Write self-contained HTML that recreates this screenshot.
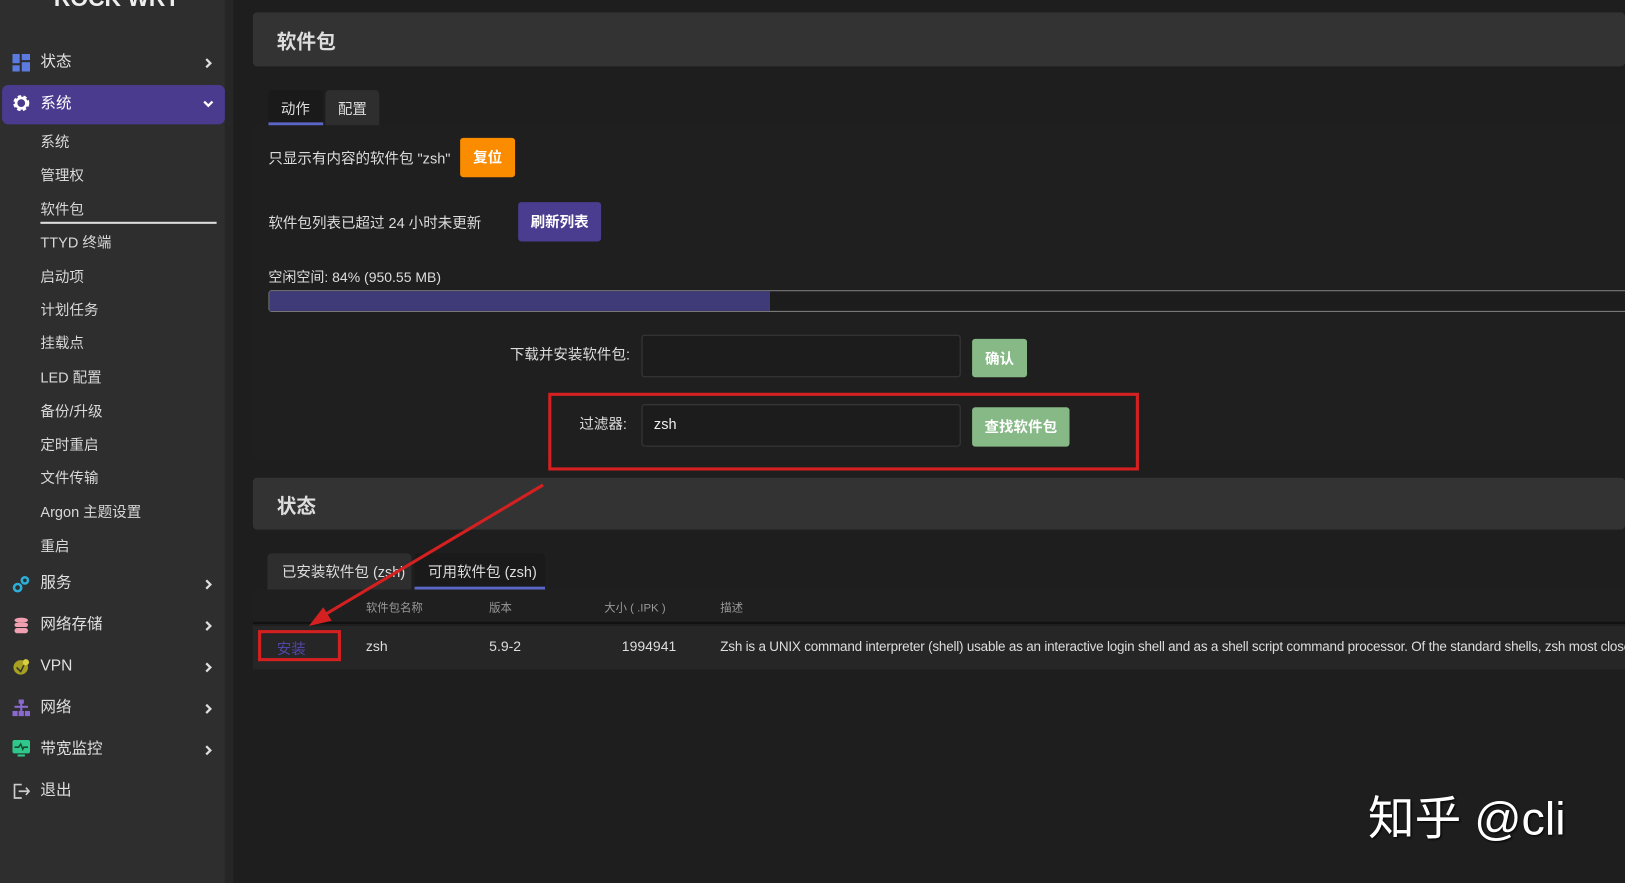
<!DOCTYPE html>
<html><head><meta charset="utf-8"><style>
*{margin:0;padding:0;box-sizing:border-box}
html,body{width:1625px;height:883px;overflow:hidden;background:#1e1e1e}
#w{position:absolute;left:0;top:0;width:1568px;height:852px;overflow:hidden;transform:scale(1.03635);transform-origin:0 0;font-family:"Liberation Sans","Noto Sans CJK SC",sans-serif;color:#ddd}
.a{position:absolute;white-space:nowrap}
#sb{position:absolute;left:0;top:0;width:225px;height:852px;background:#2e2e2e;border-right:8px solid #262626}
.mi{position:absolute;left:39px;font-size:15px;color:#e0e0e0;line-height:20px}
.si{position:absolute;left:39px;font-size:14px;color:#d8d8d8;line-height:18px}
.chev{position:absolute;left:197px;width:8px;height:12px}
.ic{position:absolute;left:12px;width:17px;height:17px}
.ph{position:absolute;left:244px;width:1324px;background:#333;border-radius:4px}
.btn{position:absolute;border-radius:3px;color:#fff;font-size:14px;font-weight:bold;display:flex;align-items:center;justify-content:center}
.inp{position:absolute;left:619px;width:308px;border:1px solid #3a3a3a;border-radius:3px;background:#1c1c1c}
</style></head><body><div id="w">
<div id="sb"></div>
<div class="a" style="left:52px;top:-14px;font-size:22px;font-weight:bold;color:#eee">ROCK WRT</div>
<svg class="ic" style="top:52px" viewBox="0 0 17 17"><rect x="0" y="0" width="7" height="9" fill="#5b7be0"/><rect x="9" y="0" width="8" height="6" fill="#5b7be0"/><rect x="0" y="11" width="7" height="6" fill="#5b7be0"/><rect x="9" y="8" width="8" height="9" fill="#5b7be0"/></svg>
<div class="mi" style="top:50px">状态</div><svg class="chev" style="top:55px" viewBox="0 0 8 12"><path d="M2 2l4 4-4 4" stroke="#ddd" stroke-width="2.2" fill="none"/></svg>
<div class="a" style="left:2px;top:82px;width:215px;height:38px;background:#4a3b8e;border-radius:6px"></div>
<svg class="ic" style="top:91px" viewBox="0 0 17 17"><circle cx="8.5" cy="8.5" r="6" fill="none" stroke="#fff" stroke-width="3.5" stroke-dasharray="3 2"/><circle cx="8.5" cy="8.5" r="5" fill="none" stroke="#fff" stroke-width="2.5"/></svg>
<div class="mi" style="top:90px;color:#fff">系统</div><svg class="a" style="left:195px;top:96px" width="12" height="8" viewBox="0 0 12 8"><path d="M2 2l4 4 4-4" stroke="#fff" stroke-width="2.2" fill="none"/></svg>
<div class="si" style="top:128px">系统</div>
<div class="si" style="top:160px">管理权</div>
<div class="si" style="top:193px">软件包</div>
<div class="a" style="left:39px;top:214px;width:170px;height:2px;background:#ddd"></div>
<div class="si" style="top:225px">TTYD 终端</div>
<div class="si" style="top:258px">启动项</div>
<div class="si" style="top:290px">计划任务</div>
<div class="si" style="top:322px">挂载点</div>
<div class="si" style="top:355px">LED 配置</div>
<div class="si" style="top:388px">备份/升级</div>
<div class="si" style="top:420px">定时重启</div>
<div class="si" style="top:452px">文件传输</div>
<div class="si" style="top:485px">Argon 主题设置</div>
<div class="si" style="top:518px">重启</div>
<svg class="ic" style="top:555px" viewBox="0 0 17 17"><circle cx="5" cy="12" r="3.5" fill="none" stroke="#2ab0d8" stroke-width="2.5"/><circle cx="12" cy="5" r="3" fill="none" stroke="#2ab0d8" stroke-width="2.5"/></svg>
<div class="mi" style="top:553px">服务</div><svg class="chev" style="top:558px" viewBox="0 0 8 12"><path d="M2 2l4 4-4 4" stroke="#ddd" stroke-width="2.2" fill="none"/></svg>
<svg class="ic" style="top:595px" viewBox="0 0 17 17"><ellipse cx="8.5" cy="3.5" rx="6.5" ry="2.5" fill="#f0a0b0"/><rect x="2" y="6" width="13" height="4" rx="2" fill="#f0a0b0"/><rect x="2" y="11" width="13" height="5" rx="2.5" fill="#f0a0b0"/></svg>
<div class="mi" style="top:593px">网络存储</div><svg class="chev" style="top:598px" viewBox="0 0 8 12"><path d="M2 2l4 4-4 4" stroke="#ddd" stroke-width="2.2" fill="none"/></svg>
<svg class="ic" style="top:635px" viewBox="0 0 17 17"><circle cx="8" cy="9" r="7" fill="#a8a020"/><circle cx="13" cy="4" r="3" fill="#d8d040"/><path d="M4 9l4 4 3-6" stroke="#333" stroke-width="1.5" fill="none"/></svg>
<div class="mi" style="top:633px">VPN</div><svg class="chev" style="top:638px" viewBox="0 0 8 12"><path d="M2 2l4 4-4 4" stroke="#ddd" stroke-width="2.2" fill="none"/></svg>
<svg class="ic" style="top:675px" viewBox="0 0 17 17" fill="#8a6ad0"><rect x="6" y="0" width="5" height="4"/><rect x="0" y="11" width="5" height="5"/><rect x="6" y="11" width="5" height="5"/><rect x="12" y="11" width="5" height="5"/><rect x="2" y="6" width="13" height="2"/><rect x="7.5" y="3" width="2" height="8"/></svg>
<div class="mi" style="top:673px">网络</div><svg class="chev" style="top:678px" viewBox="0 0 8 12"><path d="M2 2l4 4-4 4" stroke="#ddd" stroke-width="2.2" fill="none"/></svg>
<svg class="ic" style="top:714px" viewBox="0 0 17 17"><rect x="0" y="0" width="17" height="13" rx="2" fill="#2ec98a"/><rect x="5" y="14" width="7" height="2" fill="#2ec98a"/><path d="M2 7h4l2-3 2 5 1-2h4" stroke="#1a4a36" stroke-width="1.5" fill="none"/></svg>
<div class="mi" style="top:713px">带宽监控</div><svg class="chev" style="top:718px" viewBox="0 0 8 12"><path d="M2 2l4 4-4 4" stroke="#ddd" stroke-width="2.2" fill="none"/></svg>
<svg class="ic" style="top:755px" viewBox="0 0 17 17" fill="none" stroke="#ccc" stroke-width="1.6"><path d="M9 2H2v13h7M6 8.5h10M13 5l3 3.5-3 3.5"/></svg>
<div class="mi" style="top:753px">退出</div>

<div class="ph" style="top:12px;height:52px"></div>
<div class="a" style="left:267px;top:26px;font-size:19px;font-weight:bold;color:#ddd">软件包</div>
<div class="a" style="left:259px;top:87px;width:53px;height:34px;background:#1a1a1a;border-radius:4px 4px 0 0;border-bottom:3px solid #5c66c8"></div>
<div class="a" style="left:271px;top:95px;font-size:14px;color:#ddd">动作</div>
<div class="a" style="left:314px;top:87px;width:52px;height:34px;background:#2e2e2e;border-radius:4px 4px 0 0"></div>
<div class="a" style="left:326px;top:95px;font-size:14px;color:#ddd">配置</div>
<div class="a" style="left:244px;top:121px;width:1324px;height:324px;background:#1f1f1f;border-radius:4px"></div>
<div class="a" style="left:259px;top:143px;font-size:14px;color:#ddd">只显示有内容的软件包 "zsh"</div>
<div class="btn" style="left:444px;top:133px;width:53px;height:38px;background:#fb8c00">复位</div>
<div class="a" style="left:259px;top:205px;font-size:14px;color:#ddd">软件包列表已超过 24 小时未更新</div>
<div class="btn" style="left:500px;top:195px;width:80px;height:38px;background:#4a3d8f">刷新列表</div>
<div class="a" style="left:259px;top:256px;font-size:13.5px;color:#ddd">空闲空间: 84% (950.55 MB)</div>
<div class="a" style="left:259px;top:280px;width:1320px;height:21px;border:1px solid #777;border-radius:3px;background:#1c1c1c"></div>
<div class="a" style="left:260px;top:281px;width:483px;height:19px;background:#3f3a78"></div>
<div class="a" style="left:492px;top:332px;font-size:14px;color:#ddd">下载并安装软件包:</div>
<div class="inp" style="top:323px;height:41px"></div>
<div class="btn" style="left:938px;top:327px;width:53px;height:37px;background:#86b985">确认</div>
<div class="a" style="left:559px;top:399px;font-size:14px;color:#ddd">过滤器:</div>
<div class="inp" style="top:390px;height:41px"></div>
<div class="a" style="left:631px;top:401px;font-size:14px;color:#eee">zsh</div>
<div class="btn" style="left:938px;top:393px;width:94px;height:38px;background:#86b985">查找软件包</div>
<div class="a" style="left:529px;top:379px;width:570px;height:75px;border:3px solid #d42020"></div>

<div class="ph" style="top:461px;height:50px"></div>
<div class="a" style="left:267px;top:474px;font-size:19px;font-weight:bold;color:#ddd">状态</div>
<div class="a" style="left:258px;top:534px;width:139px;height:35px;background:#2e2e2e;border-radius:4px 4px 0 0"></div>
<div class="a" style="left:272px;top:542px;font-size:14px;color:#ddd">已安装软件包 (zsh)</div>
<div class="a" style="left:400px;top:534px;width:126px;height:35px;background:#1a1a1a;border-radius:4px 4px 0 0;border-bottom:3px solid #5c66c8"></div>
<div class="a" style="left:413px;top:542px;font-size:14px;color:#ddd">可用软件包 (zsh)</div>
<div class="a" style="left:244px;top:569px;width:1324px;height:33px;background:#1f1f1f;border-bottom:2px solid #111"></div>
<div class="a" style="left:353px;top:578px;font-size:11px;color:#999">软件包名称</div>
<div class="a" style="left:472px;top:578px;font-size:11px;color:#999">版本</div>
<div class="a" style="left:583px;top:578px;font-size:11px;color:#999">大小 ( .IPK )</div>
<div class="a" style="left:695px;top:578px;font-size:11px;color:#999">描述</div>
<div class="a" style="left:244px;top:604px;width:1324px;height:42px;background:#262626"></div>
<div class="a" style="left:267px;top:616px;font-size:14px;color:#5046a8">安装</div>
<div class="a" style="left:249px;top:608px;width:80px;height:30px;border:3px solid #d42020"></div>
<div class="a" style="left:353px;top:616px;font-size:13.5px;color:#ddd">zsh</div>
<div class="a" style="left:472px;top:616px;font-size:13.5px;color:#ddd">5.9-2</div>
<div class="a" style="left:600px;top:616px;font-size:13.5px;color:#ddd">1994941</div>
<div class="a" style="left:695px;top:616px;width:873px;overflow:hidden;font-size:13px;color:#ddd;letter-spacing:-0.2px">Zsh is a UNIX command interpreter (shell) usable as an interactive login shell and as a shell script command processor. Of the standard shells, zsh most closely resembles ksh</div>
<svg class="a" style="left:0;top:0" width="1568" height="852"><line x1="524" y1="468" x2="312" y2="594" stroke="#d42020" stroke-width="3"/><polygon points="298,604 312,586 320,599" fill="#d42020"/></svg>
<div class="a" style="left:1320px;top:753px;font-size:45px;color:#fff;text-shadow:1px 1px 2px #000">知乎 @cli</div>
</div></body></html>
